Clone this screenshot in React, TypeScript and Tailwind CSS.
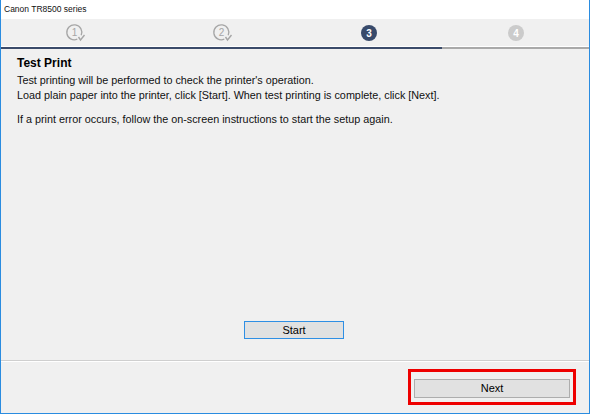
import React from "react";

const font = { fontFamily: '"Liberation Sans", Arial, sans-serif' };

const DoneStep = ({ n }: { n: number }) => (
  <svg width="22" height="20" viewBox="0 0 22 20">
    <path
      d="M16.2 12.3 A7.5 7.5 0 1 0 12.3 16.2"
      fill="none"
      stroke="#a6a6a6"
      strokeWidth="1.3"
    />
    <text
      x="9.5"
      y="13"
      textAnchor="middle"
      fontSize="10"
      fill="#a6a6a6"
      fontFamily="Liberation Sans, Arial, sans-serif"
    >
      {n}
    </text>
    <polyline
      points="13.5,14 15.5,17 19.5,12"
      fill="none"
      stroke="#a6a6a6"
      strokeWidth="1.4"
    />
  </svg>
);

const Dot = ({ n, color }: { n: number; color: string }) => (
  <svg width="18" height="18" viewBox="0 0 18 18">
    <circle cx="9" cy="9" r="8" fill={color} />
    <text
      x="9"
      y="12.6"
      textAnchor="middle"
      fontSize="10"
      fontWeight="bold"
      fill="#ffffff"
      fontFamily="Liberation Sans, Arial, sans-serif"
    >
      {n}
    </text>
  </svg>
);

export default function App() {
  return (
    <div
      className="w-[590px] h-[414px] flex flex-col bg-[#f0f0f0] border-x border-b border-[#2a8ce0] text-black"
      style={font}
    >
      <div className="h-[19px] shrink-0 bg-white flex items-center pl-[3px] text-[8.5px] text-[#111]">
        Canon TR8500 series
      </div>

      <div className="h-[27px] shrink-0 grid grid-cols-4 items-center">
        <div className="flex justify-center pl-[2px]">
          <DoneStep n={1} />
        </div>
        <div className="flex justify-center pl-[2px]">
          <DoneStep n={2} />
        </div>
        <div className="flex justify-center">
          <Dot n={3} color="#384a6b" />
        </div>
        <div className="flex justify-center">
          <Dot n={4} color="#cbcbcb" />
        </div>
      </div>

      <div className="h-[3px] shrink-0 flex border-t border-white">
        <div className="w-[441px] bg-[#3b4b6a]" />
        <div className="flex-1 bg-[#a9a9a9]" />
      </div>

      <div className="flex-1 flex flex-col px-[16px] pt-[6px]">
        <div className="text-[12px] font-bold leading-[16px]">Test Print</div>
        <div className="mt-[2px] text-[10.8px] leading-[15px] text-[#111]">
          <p>Test printing will be performed to check the printer's operation.</p>
          <p>Load plain paper into the printer, click [Start]. When test printing is complete, click [Next].</p>
          <p className="mt-[9px]">
            If a print error occurs, follow the on-screen instructions to start the setup again.
          </p>
        </div>
        <div className="flex-1" />
        <div className="flex justify-center pr-[2px] mb-[21px]">
          <button className="w-[100px] h-[18px] bg-[#e1e1e1] border border-[#2f8fe4] text-[11px] leading-none">
            Start
          </button>
        </div>
      </div>

      <div className="h-[2px] shrink-0 border-t border-[#cfcfcf] bg-white" />

      <div className="h-[51px] shrink-0 flex justify-end items-start pt-[7px] pr-[13px]">
        <div className="border-[3px] border-[#ee0000] p-[3px]">
          <button className="w-[156px] h-[19px] bg-[#e1e1e1] border border-[#adadad] text-[11px] leading-none">
            Next
          </button>
        </div>
      </div>
    </div>
  );
}
